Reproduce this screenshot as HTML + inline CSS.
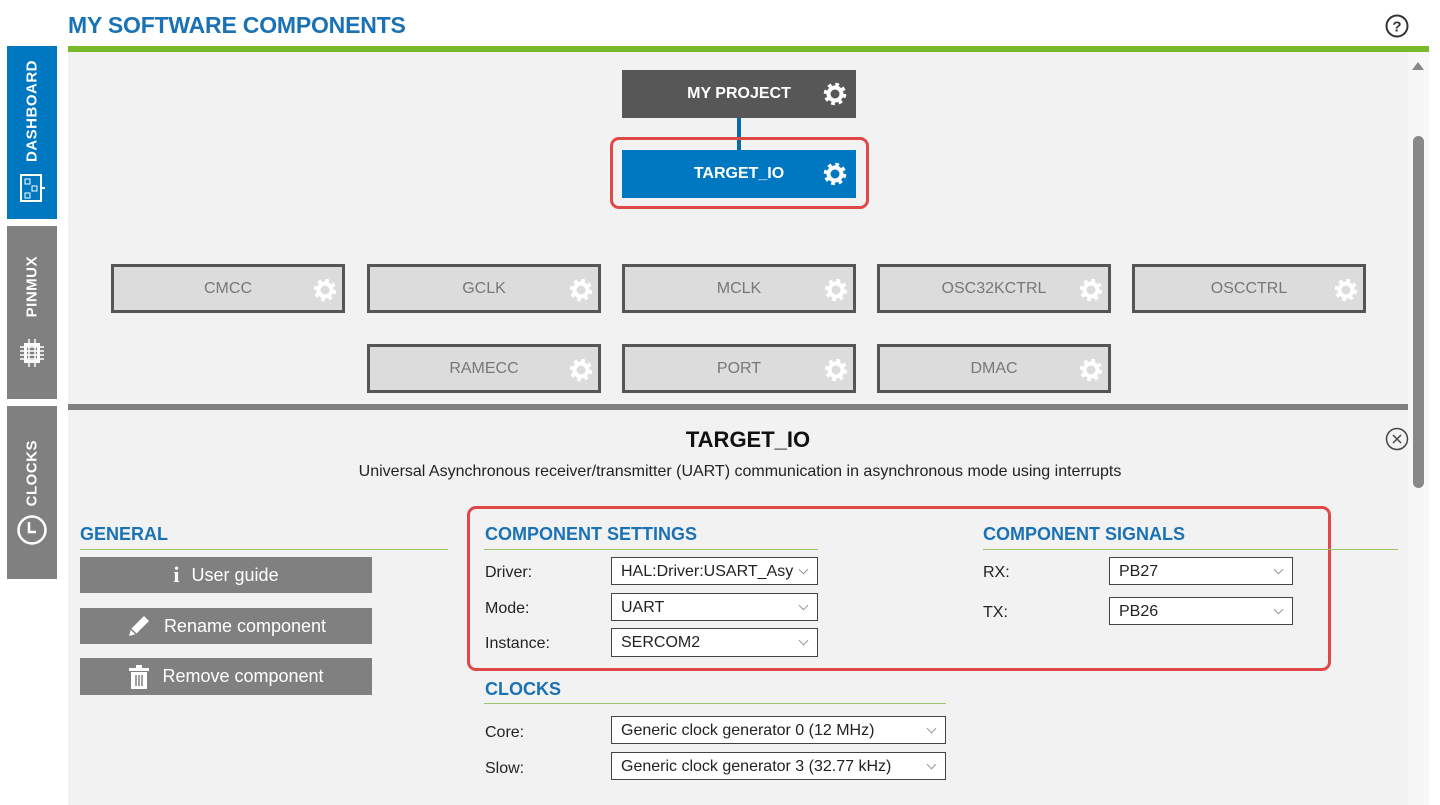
<!DOCTYPE html>
<html><head><meta charset="utf-8"><style>
*{margin:0;padding:0;box-sizing:border-box}
body{width:1440px;height:805px;background:#fff;font-family:"Liberation Sans",sans-serif;position:relative;overflow:hidden;color:#222}
.a{position:absolute}
.title{left:68px;top:12px;font-size:23px;font-weight:bold;color:#1a72b5;letter-spacing:-0.2px}
.tab{left:7px;width:50px;height:173px;background:#808080;color:#fff}
.tab span{position:absolute;left:50%;writing-mode:vertical-rl;transform:translateX(-50%) rotate(180deg);font-size:15px;font-weight:bold;letter-spacing:0.5px}
.box{width:234px;height:49px;background:#dcdcdc;border:3px solid #555;color:#777;font-size:16px;display:flex;align-items:center;justify-content:center}
.box svg{position:absolute;right:4px;top:10px}
.dk{color:#fff;font-weight:bold;border:none}
.hd{font-size:18px;color:#1a72b5;font-weight:bold}
.ln{height:1px;background:#9bc46b}
.lbl{font-size:16px;color:#222}
.sel{background:#fff;border:1px solid #444;font-size:16px;padding-left:9px;line-height:28px;color:#222}
.sel:after{content:"";position:absolute;right:10px;top:8px;width:6px;height:6px;border-right:1px solid #999;border-bottom:1px solid #999;transform:rotate(45deg)}
.btn{left:80px;width:292px;height:36px;background:#808080;color:#fff;font-size:18px;display:flex;align-items:center;justify-content:center;gap:12px}
</style></head><body>
<svg width="0" height="0" style="position:absolute"><defs>
<g id="gear"><circle cx="12" cy="12" r="9" fill="none" stroke="currentColor" stroke-width="4.5" stroke-dasharray="3.5 3.57"/><circle cx="12" cy="12" r="6.5" fill="none" stroke="currentColor" stroke-width="4"/></g>
</defs></svg>
<div class="a title">MY SOFTWARE COMPONENTS</div>
<svg class="a" style="left:1385px;top:14px" width="24" height="24"><circle cx="12" cy="12" r="10.5" fill="none" stroke="#333" stroke-width="2"/><text x="12" y="17.5" text-anchor="middle" font-family="Liberation Sans" font-weight="bold" font-size="15" fill="#333">?</text></svg>
<div class="a" style="left:68px;top:46px;width:1361px;height:6px;background:#7ab929"></div>
<div class="a" style="left:68px;top:52px;width:1340px;height:753px;background:#f2f2f2"></div>
<div class="a" style="left:1408px;top:52px;width:21px;height:753px;background:#f7f7f7"></div>
<div class="a" style="left:1412px;top:62px;width:0;height:0;border-left:6px solid transparent;border-right:6px solid transparent;border-bottom:8px solid #888"></div>
<div class="a" style="left:1413px;top:136px;width:11px;height:352px;background:#888;border-radius:6px"></div>

<div class="a tab" style="top:46px;background:#0078c1"><span style="top:14px">DASHBOARD</span>
<svg class="a" style="left:13px;top:128px" width="26" height="30"><rect x="1" y="1" width="20" height="26" fill="none" stroke="#fff" stroke-width="2"/><rect x="5" y="5" width="5" height="5" fill="none" stroke="#fff"/><rect x="12" y="12" width="5" height="5" fill="none" stroke="#fff"/><rect x="5" y="19" width="5" height="5" fill="none" stroke="#fff"/><line x1="21" y1="14" x2="25" y2="14" stroke="#fff" stroke-width="2"/></svg></div>
<div class="a tab" style="top:226px"><span style="top:30px">PINMUX</span>
<svg class="a" style="left:12px;top:112px" width="26" height="30"><rect x="5" y="5" width="16" height="20" fill="#fff"/><rect x="8" y="8" width="10" height="14" fill="#808080"/><g stroke="#fff" stroke-width="1.5"><line x1="1" y1="9" x2="25" y2="9"/><line x1="1" y1="13" x2="25" y2="13"/><line x1="1" y1="17" x2="25" y2="17"/><line x1="1" y1="21" x2="25" y2="21"/><line x1="10" y1="1" x2="10" y2="29"/><line x1="16" y1="1" x2="16" y2="29"/></g></svg></div>
<div class="a tab" style="top:406px"><span style="top:34px">CLOCKS</span>
<svg class="a" style="left:9px;top:108px" width="32" height="32"><circle cx="16" cy="16" r="13.5" fill="none" stroke="#fff" stroke-width="2.5"/><path d="M13 8v10h7" fill="none" stroke="#fff" stroke-width="2.5"/></svg></div>

<div class="a box dk" style="left:622px;top:70px;background:#575757;height:48px">MY PROJECT<svg width="26" height="26" color="#fff" style="top:11px;right:8px"><use href="#gear" x="1" y="1"/></svg></div>
<div class="a" style="left:737px;top:118px;width:4px;height:32px;background:#0a6aa8"></div>
<div class="a" style="left:610px;top:137px;width:259px;height:72px;border:3px solid #e04848;border-radius:9px"></div>
<div class="a box dk" style="left:622px;top:150px;background:#0078c1;height:48px">TARGET_IO<svg width="26" height="26" color="#fff" style="top:11px;right:8px"><use href="#gear" x="1" y="1"/></svg></div>

<div class="a box" style="left:111px;top:264px">CMCC<svg width="26" height="26" color="#fff"><use href="#gear" x="1" y="1"/></svg></div>
<div class="a box" style="left:367px;top:264px">GCLK<svg width="26" height="26" color="#fff"><use href="#gear" x="1" y="1"/></svg></div>
<div class="a box" style="left:622px;top:264px">MCLK<svg width="26" height="26" color="#fff"><use href="#gear" x="1" y="1"/></svg></div>
<div class="a box" style="left:877px;top:264px">OSC32KCTRL<svg width="26" height="26" color="#fff"><use href="#gear" x="1" y="1"/></svg></div>
<div class="a box" style="left:1132px;top:264px">OSCCTRL<svg width="26" height="26" color="#fff"><use href="#gear" x="1" y="1"/></svg></div>
<div class="a box" style="left:367px;top:344px">RAMECC<svg width="26" height="26" color="#fff"><use href="#gear" x="1" y="1"/></svg></div>
<div class="a box" style="left:622px;top:344px">PORT<svg width="26" height="26" color="#fff"><use href="#gear" x="1" y="1"/></svg></div>
<div class="a box" style="left:877px;top:344px">DMAC<svg width="26" height="26" color="#fff"><use href="#gear" x="1" y="1"/></svg></div>

<div class="a" style="left:68px;top:404px;width:1340px;height:6px;background:#808080"></div>
<div class="a" style="left:0;width:1496px;top:427px;text-align:center;font-size:22px;font-weight:bold;color:#111">TARGET_IO</div>
<div class="a" style="left:0;width:1480px;top:463px;text-align:center;font-size:16px;color:#222">Universal Asynchronous receiver/transmitter (UART) communication in asynchronous mode using interrupts</div>
<svg class="a" style="left:1385px;top:427px" width="24" height="24"><circle cx="12" cy="12" r="10.5" fill="none" stroke="#444" stroke-width="1.5"/><path d="M8 8l8 8M16 8l-8 8" stroke="#444" stroke-width="1.5"/></svg>

<div class="a hd" style="left:80px;top:524px">GENERAL</div>
<div class="a ln" style="left:80px;top:549px;width:368px"></div>
<div class="a btn" style="top:557px"><b style="font-size:22px;font-family:'Liberation Serif',serif">i</b>User guide</div>
<div class="a btn" style="top:608px"><svg width="26" height="26"><path d="M3 23l2-7L18 3l5 5L10 21z" fill="#fff"/><path d="M5 16l5 5" stroke="#808080" stroke-width="1.5"/></svg>Rename component</div>
<div class="a btn" style="top:658px;height:37px"><svg width="22" height="26"><rect x="1" y="4" width="20" height="3" fill="#fff"/><rect x="8" y="1" width="6" height="4" fill="#fff"/><rect x="3" y="8" width="16" height="17" fill="#fff"/><g stroke="#808080" stroke-width="1.5"><line x1="8" y1="11" x2="8" y2="22"/><line x1="11" y1="11" x2="11" y2="22"/><line x1="14" y1="11" x2="14" y2="22"/></g></svg>Remove component</div>

<div class="a" style="left:467px;top:506px;width:864px;height:165px;border:3px solid #e04848;border-radius:9px"></div>
<div class="a hd" style="left:485px;top:524px">COMPONENT SETTINGS</div>
<div class="a ln" style="left:484px;top:549px;width:334px"></div>
<div class="a lbl" style="left:485px;top:564px">Driver:</div>
<div class="a lbl" style="left:485px;top:600px">Mode:</div>
<div class="a lbl" style="left:485px;top:635px">Instance:</div>
<div class="a sel" style="left:611px;top:557px;width:207px;height:28px">HAL:Driver:USART_Asy</div>
<div class="a sel" style="left:611px;top:593px;width:207px;height:28px">UART</div>
<div class="a sel" style="left:611px;top:628px;width:207px;height:29px">SERCOM2</div>

<div class="a hd" style="left:983px;top:524px">COMPONENT SIGNALS</div>
<div class="a ln" style="left:983px;top:549px;width:415px"></div>
<div class="a lbl" style="left:983px;top:564px">RX:</div>
<div class="a lbl" style="left:983px;top:604px">TX:</div>
<div class="a sel" style="left:1109px;top:557px;width:184px;height:28px">PB27</div>
<div class="a sel" style="left:1109px;top:597px;width:184px;height:28px">PB26</div>

<div class="a hd" style="left:485px;top:679px">CLOCKS</div>
<div class="a ln" style="left:484px;top:703px;width:462px"></div>
<div class="a lbl" style="left:485px;top:724px">Core:</div>
<div class="a lbl" style="left:485px;top:760px">Slow:</div>
<div class="a sel" style="left:611px;top:716px;width:335px;height:28px">Generic clock generator 0 (12 MHz)</div>
<div class="a sel" style="left:611px;top:752px;width:335px;height:28px">Generic clock generator 3 (32.77 kHz)</div>
</body></html>
